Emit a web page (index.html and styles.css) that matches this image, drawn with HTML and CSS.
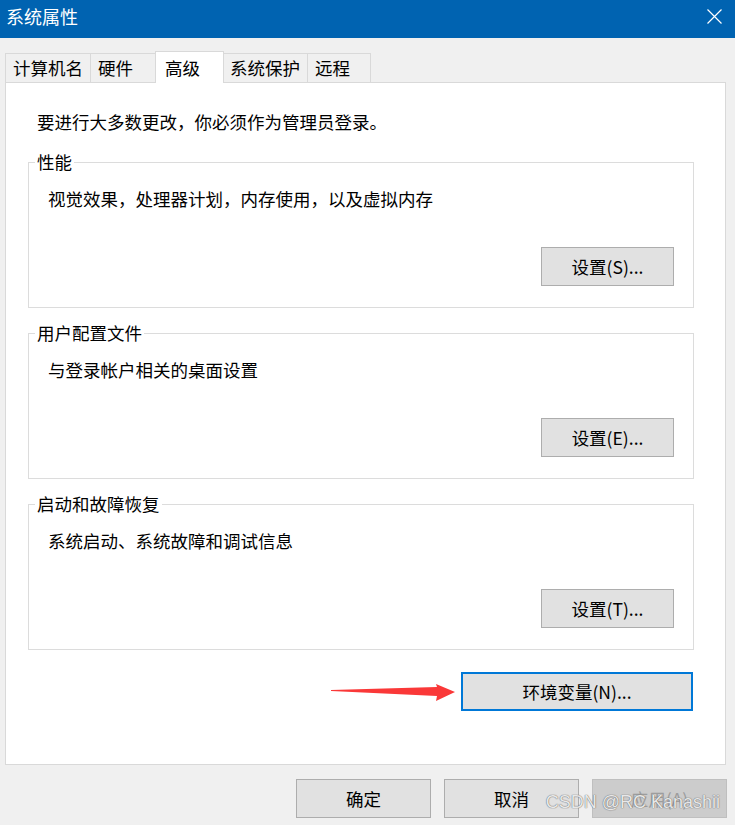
FILE: index.html
```html
<!DOCTYPE html>
<html lang="zh-CN">

<head>
    <meta charset="UTF-8" />
    <meta name="viewport" content="width=device-width, initial-scale=1.0" />
    <title>系统属性</title>
    <link rel="stylesheet" href="styles.css">
</head>

<body>
    <div class="titlebar">
        <span class="title">系统属性</span>
        <button class="close-btn" aria-label="关闭">
            <svg width="15" height="15" viewBox="0 0 15 15">
                <path d="M0.5 0.5 L14.5 14.5 M14.5 0.5 L0.5 14.5" stroke="#fff" stroke-width="1.2" fill="none" />
            </svg>
        </button>
    </div>

    <div class="tabs">
        <div class="tab">计算机名</div>
        <div class="tab">硬件</div>
        <div class="tab active">高级</div>
        <div class="tab">系统保护</div>
        <div class="tab last">远程</div>
    </div>

    <div class="panel">
        <p class="notice">要进行大多数更改，你必须作为管理员登录。</p>

        <fieldset class="group">
            <legend>性能</legend>
            <p class="group-desc">视觉效果，处理器计划，内存使用，以及虚拟内存</p>
            <div class="group-actions">
                <button class="btn">设置(S)...</button>
            </div>
        </fieldset>

        <fieldset class="group">
            <legend>用户配置文件</legend>
            <p class="group-desc">与登录帐户相关的桌面设置</p>
            <div class="group-actions">
                <button class="btn">设置(E)...</button>
            </div>
        </fieldset>

        <fieldset class="group">
            <legend>启动和故障恢复</legend>
            <p class="group-desc">系统启动、系统故障和调试信息</p>
            <div class="group-actions">
                <button class="btn">设置(T)...</button>
            </div>
        </fieldset>

        <div class="env-row">
            <!-- red annotation arrow -->
            <svg class="arrow" width="124" height="20" viewBox="0 0 124 20">
                <polygon points="0,8 106,5 105,2 124,10 105,19 106,14 0,9" fill="#fa3838" />
            </svg>
            <button class="btn btn-env">环境变量(N)...</button>
        </div>
    </div>

    <div class="footer">
        <button class="btn btn-footer">确定</button>
        <button class="btn btn-footer">取消</button>
        <button class="btn btn-footer" disabled>应用(A)</button>
        <span class="watermark">CSDN @RC Kanashii</span>
    </div>
</body>

</html>
```

FILE: styles.css
```css
body {
    margin: 0;
    padding: 0;
    background-color: #f0f0f0;
    font-family: "Noto Sans CJK SC", "Noto Sans", sans-serif;
    font-size: 17.5px;
    line-height: 22px;
    color: #000;
    overflow: hidden;
}

.titlebar {
    display: flex;
    justify-content: space-between;
    align-items: flex-start;
    height: 38px;
    background-color: #0063b1;
    color: #fff;
}

.title {
    font-size: 18px;
    line-height: 32px;
    padding-left: 6px;
}

.close-btn {
    background: none;
    border: none;
    padding: 0;
    margin: 9px 13px 0 0;
    width: 15px;
    height: 15px;
    cursor: pointer;
}

.close-btn svg {
    display: block;
}

/* tabs */
.tabs {
    display: flex;
    align-items: flex-end;
    height: 31px;
    margin: 13px 0 0 5px;
}

.tab {
    box-sizing: border-box;
    min-width: 67px;
    height: 29px;
    padding: 0 7px;
    line-height: 28px;
    border: 1px solid #d9d9d9;
    border-right: none;
    border-bottom: none;
    background-color: #f0f0f0;
}

.tab.last {
    min-width: 64px;
    border-right: 1px solid #d9d9d9;
}

.tab.active {
    position: relative;
    z-index: 1;
    height: 32px;
    min-width: 69px;
    margin: 0 -2px -1px -2px;
    padding: 0 9px;
    line-height: 31px;
    background-color: #fff;
    border-right: 1px solid #d9d9d9;
}

.panel {
    box-sizing: border-box;
    width: 721px;
    height: 683px;
    margin-left: 5px;
    padding-top: 28px;
    background-color: #fff;
    border: 1px solid #d9d9d9;
}

.notice {
    margin: 0 0 18px 31px;
}

/* group boxes */
.group {
    margin: 0 31px 14px 22px;
    padding: 0;
    border: 1px solid #dcdcdc;
}

.group legend {
    margin-left: 6px;
    padding: 0 2px;
}

.group-desc {
    margin: 15px 0 0 19px;
}

.group-actions {
    display: flex;
    justify-content: flex-end;
    margin-top: 37px;
    padding: 0 19px 21px 0;
}

.btn {
    box-sizing: border-box;
    width: 133px;
    height: 39px;
    font-family: inherit;
    font-size: 17.5px;
    color: #000;
    background-color: #e1e1e1;
    border: 1px solid #adadad;
    padding: 0;
    cursor: pointer;
}

.env-row {
    display: flex;
    justify-content: flex-end;
    align-items: center;
    margin-top: 22px;
    padding-right: 32px;
}

.arrow {
    display: block;
    margin-right: 6px;
}

.btn-env {
    width: 232px;
    border: 2px solid #0078d7;
}

.footer {
    position: relative;
    display: flex;
    justify-content: flex-end;
    gap: 13px;
    margin-top: 14px;
    padding-right: 8px;
}

.btn-footer {
    width: 135px;
}

.btn-footer:disabled {
    background-color: #cccccc;
    border-color: #bfbfbf;
    color: #9d9d9d;
    cursor: default;
}

/* screenshot watermark, lies over the apply button */
.watermark {
    position: absolute;
    right: 15px;
    top: 12px;
    font-family: "Liberation Sans", Arial, sans-serif;
    font-size: 18px;
    line-height: 22px;
    color: rgba(255, 255, 255, 0.85);
    text-shadow: 0 0 1px #6e6e6e, 0 0 1px #6e6e6e;
    pointer-events: none;
}
```
